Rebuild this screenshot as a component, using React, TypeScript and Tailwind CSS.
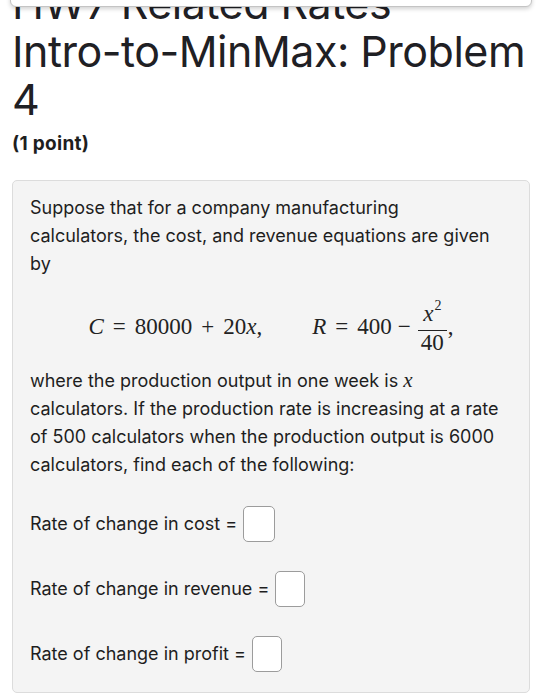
import React from 'react';

const AnswerRow: React.FC<{ label: string; box: string }> = ({ label, box }) => (
  <div className="flex items-center h-[36px]">
    <span>{label} =</span>
    <span className={`ml-[6px] h-[36px] ${box} rounded-[5px] border-[1.5px] border-[#9c9c9c] bg-white`} />
  </div>
);

const Frac: React.FC<{ num: React.ReactNode; den: React.ReactNode }> = ({ num, den }) => (
  <span className="inline-flex flex-col items-center mx-[4px] mt-[4px]">
    <span className="leading-[23px] mb-[5px] px-[2px]">{num}</span>
    <span className="h-[1px] w-full bg-[#222]" />
    <span className="leading-[23px] mt-[0px] px-[3px]">{den}</span>
  </span>
);

export default function App() {
  return (
    <div className="relative min-h-[700px] overflow-hidden bg-white text-[#1e1e1e] font-[Inter,'Liberation_Sans',sans-serif]">
      {/* search overlay clipped at the top */}
      <div className="absolute left-[10px] right-[10px] top-[-30px] h-[37px] z-10 bg-white border border-[#c4c4c4] rounded-b-[6px] shadow-[0_2px_4px_rgba(0,0,0,0.18)]" />

      <div className="px-[12px]">
        <h1 className="mt-[-21px] whitespace-nowrap text-[43px] leading-[48px] font-normal tracking-[-0.5px] text-[#1f2024]">
          HW7 Related Rates
          <br />
          Intro-to-MinMax: Problem
          <br />4
        </h1>
        <div className="mt-[7px] text-[19px] leading-[28px] font-bold tracking-[0.3px]">(1 point)</div>

        <div className="mt-[22px] rounded-[5px] border border-[#dcdcdc] bg-[#f4f4f4] px-[17px] pt-[13px] pb-[20px] text-[18px] leading-[28px]">
          <p className="whitespace-nowrap">
            Suppose that for a company manufacturing
            <br />
            calculators, the cost, and revenue equations are given
            <br />
            by
          </p>

          <div className="h-[88px] pt-[8px] flex items-center justify-center font-['Liberation_Serif',serif] text-[23px] leading-[23px] text-[#222]">
            <span className="italic">C</span>
            <span className="px-[9px]">=</span>
            <span>80000</span>
            <span className="px-[9px]">+</span>
            <span>20</span>
            <span className="italic">x</span>
            <span>,</span>
            <span className="ml-[50px] italic">R</span>
            <span className="px-[9px]">=</span>
            <span>400</span>
            <span className="pl-[6px] pr-[3px]">−</span>
            <Frac
              num={
                <span className="inline-flex items-start">
                  <span className="italic">x</span>
                  <span className="text-[14px] leading-[14px] ml-[1px] mt-[-3px]">2</span>
                </span>
              }
              den={<span>40</span>}
            />
            <span className="ml-[-3px]">,</span>
          </div>

          <p className="whitespace-nowrap">
            where the production output in one week is{' '}
            <span className="italic font-['Liberation_Serif',serif] text-[21px]">x</span>
            <br />
            calculators. If the production rate is increasing at a rate
            <br />
            of 500 calculators when the production output is 6000
            <br />
            calculators, find each of the following:
          </p>

          <div className="mt-[27px] flex flex-col gap-[29px]">
            <AnswerRow label="Rate of change in cost" box="w-[32px]" />
            <AnswerRow label="Rate of change in revenue" box="w-[30px]" />
            <AnswerRow label="Rate of change in profit" box="w-[30px]" />
          </div>
        </div>
      </div>
    </div>
  );
}
